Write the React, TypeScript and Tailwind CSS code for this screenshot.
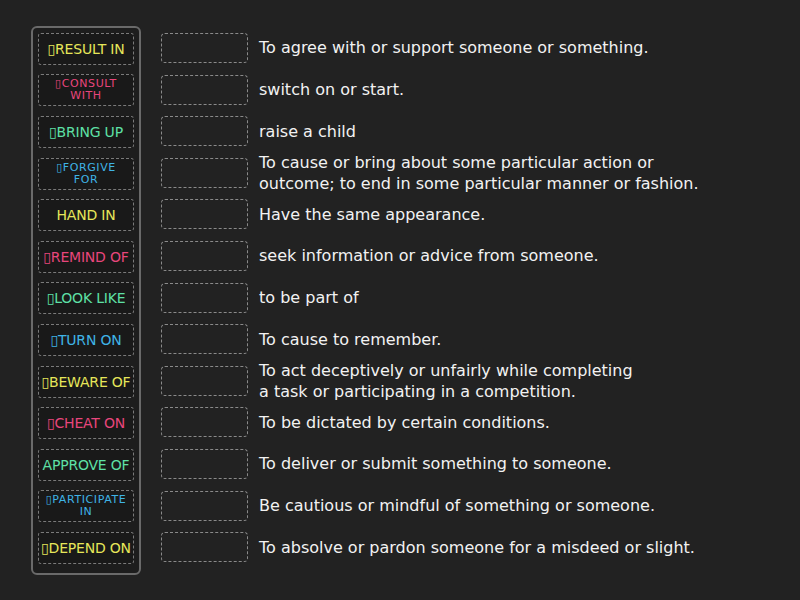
const items: { term: string[]; color: string }[] = [
  { term: ["▯RESULT IN"], color: "text-[#e6e65a]" },
  { term: ["▯CONSULT", "WITH"], color: "text-[#e8467c]" },
  { term: ["▯BRING UP"], color: "text-[#5ee0a6]" },
  { term: ["▯FORGIVE", "FOR"], color: "text-[#3fb4e6]" },
  { term: ["HAND IN"], color: "text-[#e6e65a]" },
  { term: ["▯REMIND OF"], color: "text-[#e8467c]" },
  { term: ["▯LOOK LIKE"], color: "text-[#5ee0a6]" },
  { term: ["▯TURN ON"], color: "text-[#3fb4e6]" },
  { term: ["▯BEWARE OF"], color: "text-[#e6e65a]" },
  { term: ["▯CHEAT ON"], color: "text-[#e8467c]" },
  { term: ["APPROVE OF"], color: "text-[#5ee0a6]" },
  { term: ["▯PARTICIPATE", "IN"], color: "text-[#3fb4e6]" },
  { term: ["▯DEPEND ON"], color: "text-[#e6e65a]" },
];

const definitions: string[][] = [
  ["To agree with or support someone or something."],
  ["switch on or start."],
  ["raise a child"],
  [
    "To cause or bring about some particular action or",
    "outcome; to end in some particular manner or fashion.",
  ],
  ["Have the same appearance."],
  ["seek information or advice from someone."],
  ["to be part of"],
  ["To cause to remember."],
  [
    "To act deceptively or unfairly while completing",
    "a task or participating in a competition.",
  ],
  ["To be dictated by certain conditions."],
  ["To deliver or submit something to someone."],
  ["Be cautious or mindful of something or someone."],
  ["To absolve or pardon someone for a misdeed or slight."],
];

export default function App() {
  return (
    <div
      className="w-[800px] h-[600px] bg-[#222222] text-white flex items-start pl-[31px] pt-[26px] overflow-hidden"
      style={{ fontFamily: '"DejaVu Sans", sans-serif' }}
    >
      {/* Term cards */}
      <div className="w-[110px] border-2 border-[#6a6a6a] rounded-md bg-[#1d1d1d] px-[5px] pb-[4px] flex flex-col">
        {items.map((it) => (
          <div key={it.term.join(" ")} className="h-[41.6px] flex items-center">
            <div
              className={`w-full h-[32px] border border-dashed border-[#7a7a7a] rounded-[3px] bg-[#191919] flex flex-col items-center justify-center text-center whitespace-nowrap ${it.color} ${
                it.term.length > 1
                  ? "text-[11px] leading-[12px] tracking-[0.6px]"
                  : "text-[14px] leading-none tracking-[-0.2px]"
              }`}
            >
              {it.term.map((t) => (
                <span key={t}>{t}</span>
              ))}
            </div>
          </div>
        ))}
      </div>

      {/* Drop zones and definitions */}
      <div className="flex flex-col ml-[20px] pt-[1.2px]">
        {definitions.map((lines, i) => (
          <div key={i} className="h-[41.6px] flex items-center">
            <div className="w-[87px] h-[30px] border border-dashed border-[#8a8a8a] rounded-[4px] shrink-0" />
            <div className="ml-[11px] text-[16px] leading-[21px] text-[#f2f2f2] whitespace-nowrap">
              {lines.map((l) => (
                <div key={l}>{l}</div>
              ))}
            </div>
          </div>
        ))}
      </div>
    </div>
  );
}
